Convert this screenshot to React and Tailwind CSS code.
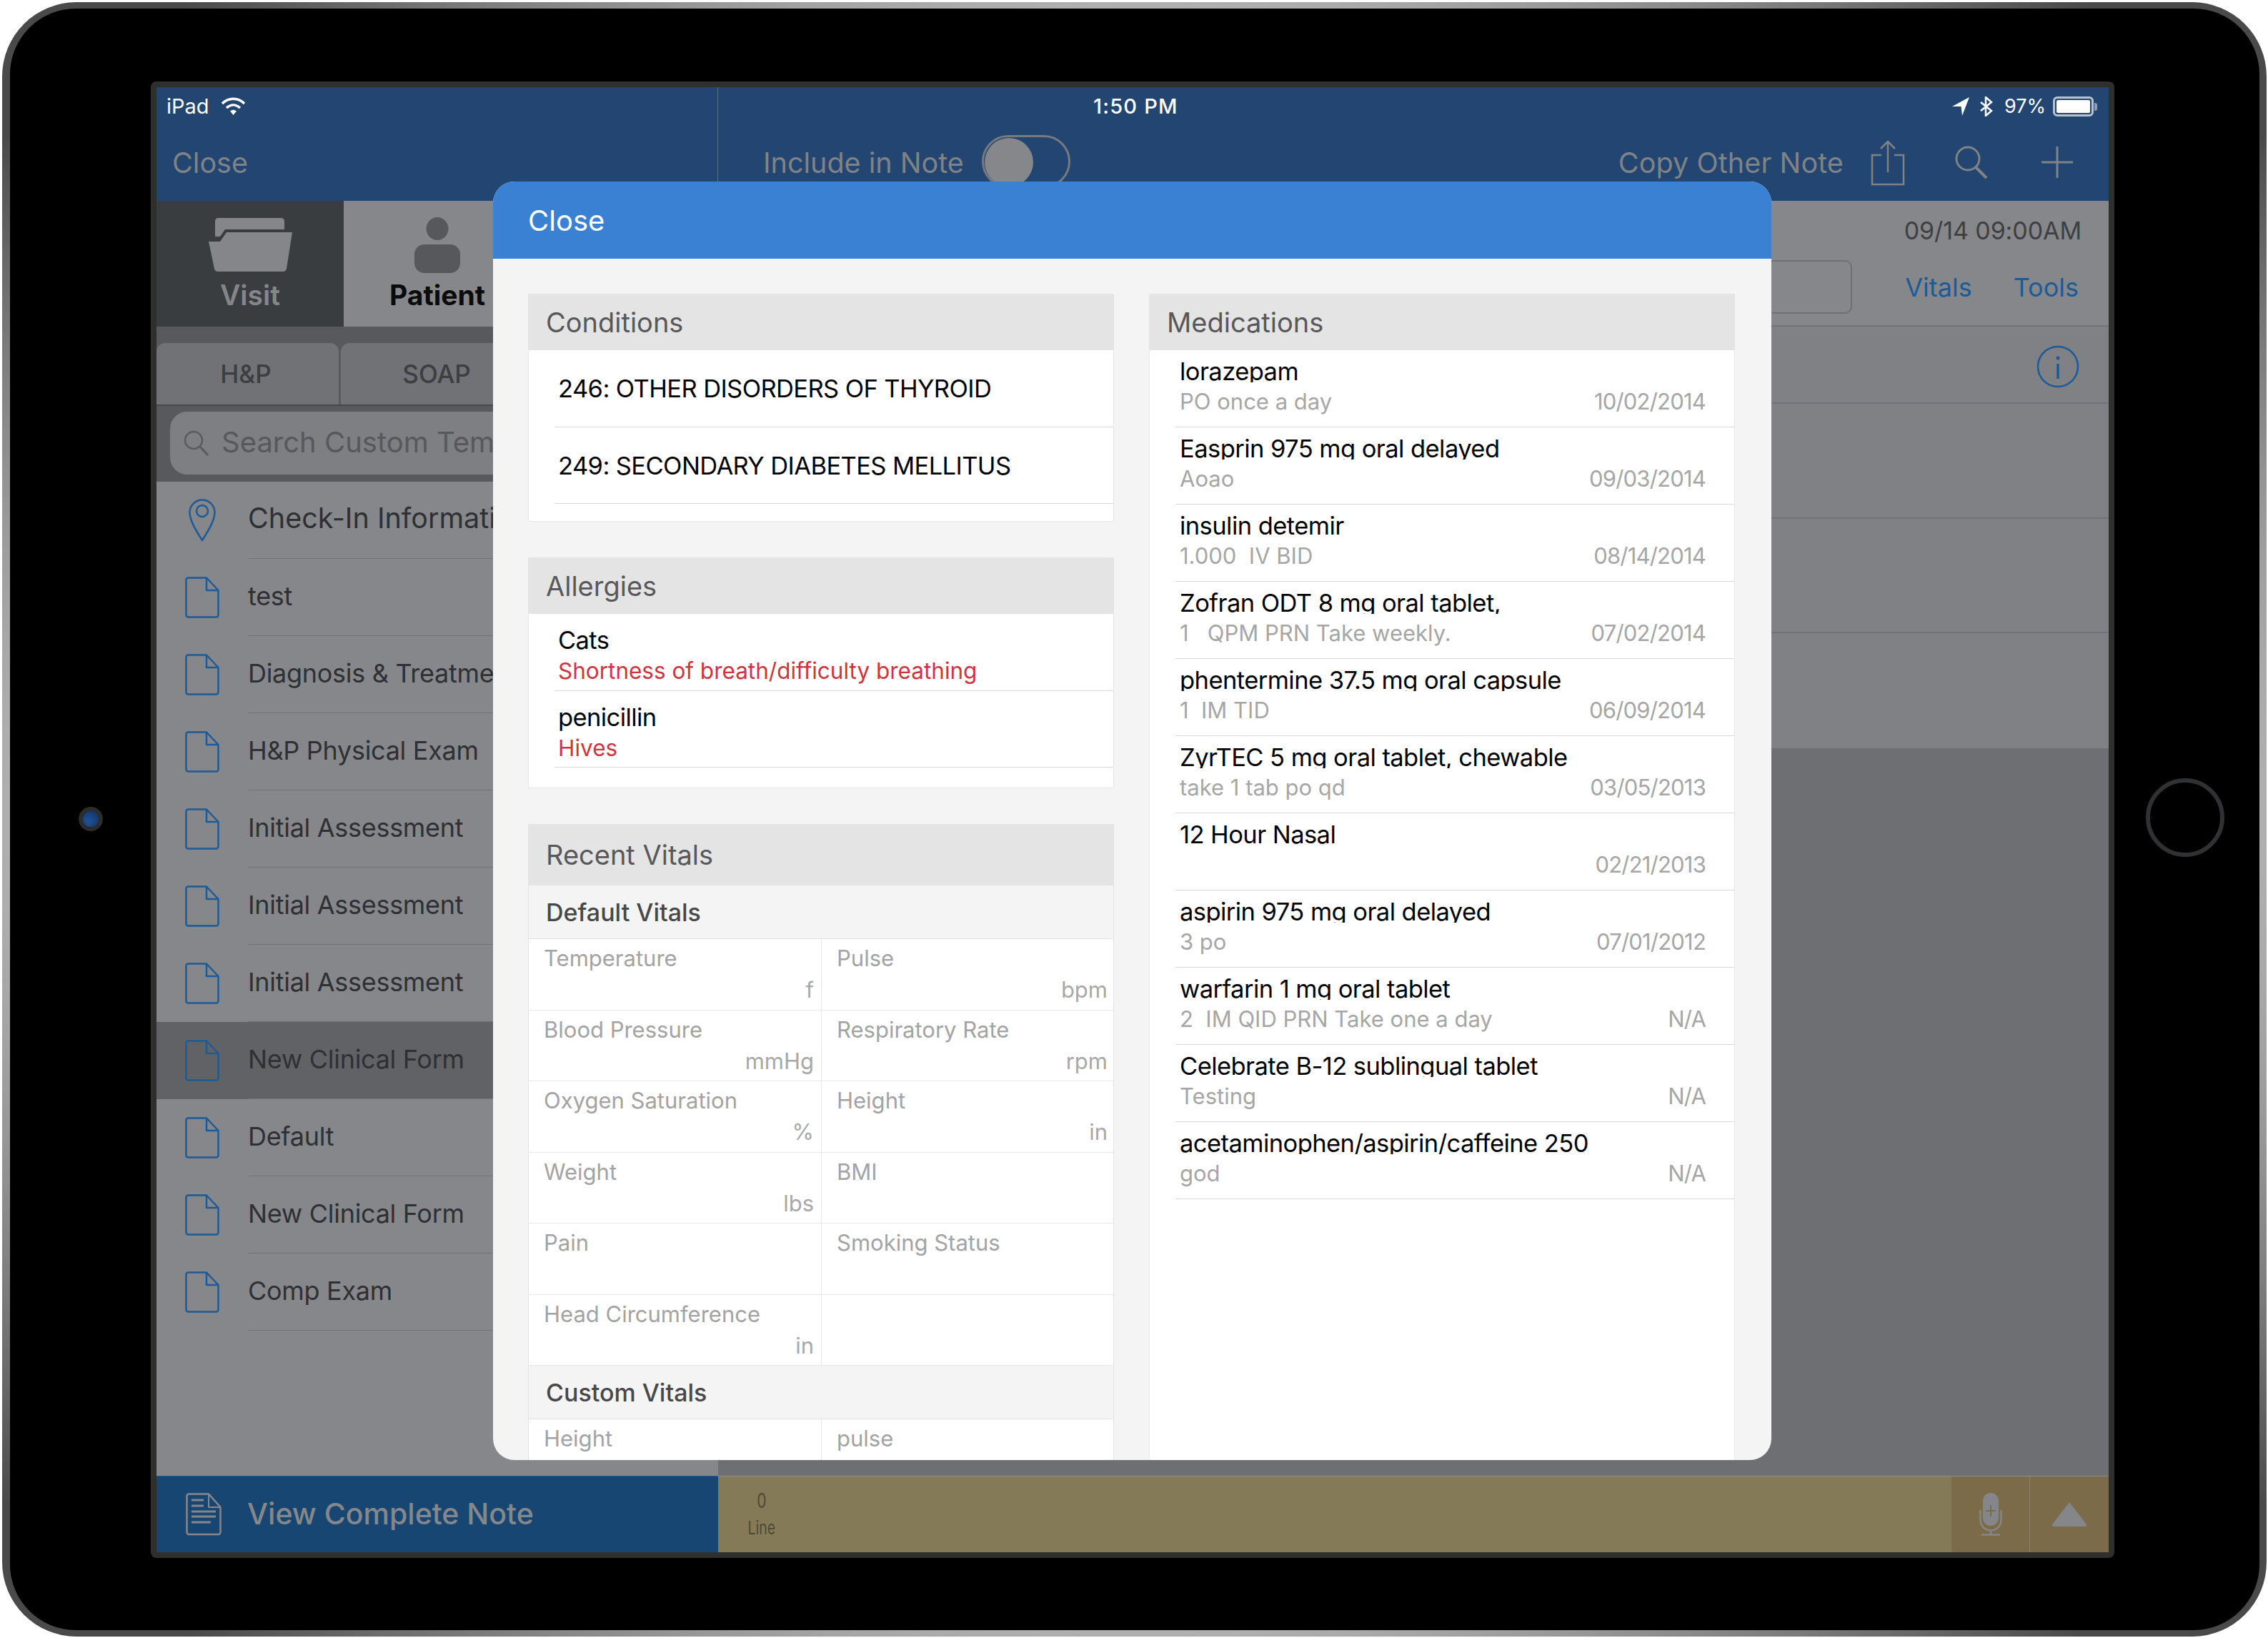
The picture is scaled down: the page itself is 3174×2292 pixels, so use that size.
import React from "react";

const sidebarRows = [
  { label: "Check-In Information", pin: true },
  { label: "test" },
  { label: "Diagnosis & Treatment" },
  { label: "H&P Physical Exam" },
  { label: "Initial Assessment" },
  { label: "Initial Assessment" },
  { label: "Initial Assessment" },
  { label: "New Clinical Form", active: true },
  { label: "Default" },
  { label: "New Clinical Form" },
  { label: "Comp Exam" },
];

const meds = [
  ["lorazepam", "PO once a day", "10/02/2014"],
  ["Easprin 975 mg oral delayed", "Aoao", "09/03/2014"],
  ["insulin detemir", "1.000  IV BID", "08/14/2014"],
  ["Zofran ODT 8 mg oral tablet,", "1   QPM PRN Take weekly.", "07/02/2014"],
  ["phentermine 37.5 mg oral capsule", "1  IM TID", "06/09/2014"],
  ["ZyrTEC 5 mg oral tablet, chewable", "take 1 tab po qd", "03/05/2013"],
  ["12 Hour Nasal", "", "02/21/2013"],
  ["aspirin 975 mg oral delayed", "3 po", "07/01/2012"],
  ["warfarin 1 mg oral tablet", "2  IM QID PRN Take one a day", "N/A"],
  ["Celebrate B-12 sublingual tablet", "Testing", "N/A"],
  ["acetaminophen/aspirin/caffeine 250", "god", "N/A"],
];

const defaultVitals = [
  ["Temperature", "f"],
  ["Pulse", "bpm"],
  ["Blood Pressure", "mmHg"],
  ["Respiratory Rate", "rpm"],
  ["Oxygen Saturation", "%"],
  ["Height", "in"],
  ["Weight", "lbs"],
  ["BMI", ""],
  ["Pain", ""],
  ["Smoking Status", ""],
  ["Head Circumference", "in"],
  ["", ""],
];

function FileIcon() {
  return (
    <svg width="48" height="58" viewBox="0 0 48 58" fill="none" stroke="#1d5b96" strokeWidth="2.5" strokeLinejoin="round">
      <path d="M4 1.5h26L46.5 19v34.5a3 3 0 0 1-3 3H4.5a3 3 0 0 1-3-3V4a3 3 0 0 1 2.500-2.500z" />
      <path d="M30 1.500V19h16.500" />
    </svg>
  );
}

function PinIcon() {
  return (
    <svg width="38" height="60" viewBox="0 0 38 60" fill="none" stroke="#1d5b96" strokeWidth="2.5">
      <path d="M19 58C12 47 1.500 31 1.500 19a17.500 17.500 0 0 1 35 0c0 12-10.500 28-17.500 39z" strokeLinejoin="round" />
      <circle cx="19" cy="17" r="8" />
    </svg>
  );
}

function StatusBar() {
  return (
    <div className="flex h-[52px] text-white text-[27px]">
      <div className="w-[786px] shrink-0 flex items-center gap-[16px] pl-[14px] pt-[2px] border-r border-[#5c6f86]">
        <span className="text-[29px]">iPad</span>
        <svg width="35" height="26" viewBox="0 0 35 26" fill="none" stroke="#fff" strokeWidth="3.500">
          <path d="M2 9c9-9 22-9 31 0" />
          <path d="M8 15c6-5.500 13-5.500 19 0" />
          <path d="M13 19.500q4.500-3.500 9 0L17.500 25z" fill="#fff" stroke="none" />
        </svg>
      </div>
      <div className="flex-1 flex items-center pt-[2px]">
        <span className="ml-[525px] text-[29px] tracking-[1.2px] font-medium">1:50 PM</span>
        <div className="ml-auto flex items-center pr-[16px]">
          <svg width="24" height="26" viewBox="0 0 24 26" fill="#fff">
            <path d="M24 0 0 13h12.500L14 26z" />
          </svg>
          <svg className="ml-[14px]" width="19" height="28" viewBox="0 0 19 28" fill="none" stroke="#fff" strokeWidth="2.500">
            <path d="M2 8l15 12-8 7V1l8 7L2 20" />
          </svg>
          <span className="ml-[16px]">97%</span>
          <div className="ml-[10px] w-[57px] h-[28px] rounded-[6px] border-[3px] border-[#b9c2cf] p-[2px]">
            <div className="w-full h-full bg-white rounded-[2px]" />
          </div>
          <div className="w-[4px] h-[11px] ml-[1px] bg-[#8fa0b5] rounded-r-[3px]" />
        </div>
      </div>
    </div>
  );
}

function NavBar() {
  return (
    <div className="flex h-[107px] text-[#7f8386] text-[39.500px]">
      <div className="w-[786px] shrink-0 pl-[22px] pt-[31px] leading-[46px] border-r border-[#5c6f86]">Close</div>
      <div className="flex-1 flex">
        <span className="ml-[63px] mt-[31px] leading-[46px]">Include in Note</span>
        <div className="ml-[25px] mt-[15px] w-[124px] h-[74px] rounded-full border-[3px] border-[#78797c] p-[1px]">
          <div className="w-[68px] h-[68px] rounded-full bg-[#86878a]" />
        </div>
        <span className="ml-auto mt-[31px] leading-[46px] tracking-[0.1px]">Copy Other Note</span>
        <svg className="ml-[38px] mt-[21px]" width="48" height="65" viewBox="0 0 48 65" fill="none" stroke="#7f8386" strokeWidth="2.500">
          <path d="M15 22H2v41h44V22H33" />
          <path d="M24 46V3M14 13 24 3l10 10" />
        </svg>
        <svg className="ml-[70px] mt-[30px]" width="46" height="46" viewBox="0 0 46 46" fill="none" stroke="#7f8386" strokeWidth="3">
          <circle cx="18" cy="18" r="16" />
          <path d="M29 30l15 15" strokeWidth="4" />
        </svg>
        <svg className="ml-[74px] mt-[30px] mr-[49px]" width="46" height="46" viewBox="0 0 46 46" fill="none" stroke="#7f8386" strokeWidth="3">
          <path d="M23 1v44M1 23h44" />
        </svg>
      </div>
    </div>
  );
}

function Sidebar() {
  return (
    <div className="w-[786px] shrink-0 flex flex-col bg-[#838487]">
      <div className="flex h-[176px]">
        <div className="w-[262px] bg-[#3a3d40] flex flex-col items-center pt-[24px]">
          <svg width="117" height="76" viewBox="0 0 117 76" fill="#85868a">
            <path d="M9 26V5q0-5 5-5h87q5 0 5 5v11H23l-7 10z" />
            <path d="M0 33h16l9-13h92l-8 51q-1 4-5 4H13q-4 0-5-4z" />
          </svg>
          <span className="mt-[10px] text-[39px] leading-[44px] font-semibold text-[#85868a]">Visit</span>
        </div>
        <div className="w-[262px] bg-[#86878a] flex flex-col items-center pt-[22px]">
          <svg width="64" height="80" viewBox="0 0 64 80" fill="#57585b">
            <ellipse cx="32" cy="17" rx="15.500" ry="16" />
            <rect x="0" y="39" width="64" height="40" rx="14" />
          </svg>
          <span className="mt-[8px] text-[39px] leading-[44px] font-bold text-[#0b0b0b]">Patient</span>
        </div>
        <div className="w-[262px] bg-[#3a3d40]" />
      </div>
      <div className="h-[217px] bg-[#58595c] flex flex-col">
        <div className="flex gap-[3px] mt-[23px] h-[86px] border-b-2 border-[#47484b] box-content">
          <div className="w-[255px] h-[86px] rounded-t-[12px] bg-[#717275] flex items-center justify-center pr-[5px] text-[35px] font-medium text-[#3c3e41]">H&amp;P</div>
          <div className="w-[268px] h-[86px] rounded-t-[12px] bg-[#717275] flex items-center justify-center text-[35px] font-medium text-[#3c3e41]">SOAP</div>
        </div>
        <div className="ml-[19px] mr-[19px] mt-[8px] h-[88px] rounded-[24px] bg-[#7e7f82] flex items-center pl-[19px] overflow-hidden">
          <svg width="36" height="36" viewBox="0 0 36 36" fill="none" stroke="#5a5b5e" strokeWidth="2.500">
            <circle cx="14" cy="14" r="12" />
            <path d="M23 23l11 12" strokeWidth="3" />
          </svg>
          <span className="ml-[17px] pb-[3px] text-[40px] text-[#57585b] whitespace-nowrap">Search Custom Templates</span>
        </div>
      </div>
      <div className="flex-1 bg-[#86878a]">
        {sidebarRows.map((row, i) => (
          <div key={i} className={`flex h-[108px] items-center ${row.active ? "bg-[#616266]" : ""}`}>
            <div className="w-[128px] shrink-0 flex justify-center">
              {row.pin ? <PinIcon /> : <FileIcon />}
            </div>
            <div className={`flex-1 h-full flex items-center pb-[3px] border-b border-[#727376] text-[#2e3033] whitespace-nowrap ${row.pin ? "text-[39.500px]" : "text-[36px] tracking-[-0.3px]"}`}>
              {row.label}
            </div>
          </div>
        ))}
      </div>
      <div className="h-[107px] bg-[#174672] border-t border-[#2c5a85] flex items-center pl-[41px]">
        <svg width="50" height="60" viewBox="0 0 50 60" fill="none" stroke="#85878a" strokeWidth="2.500">
          <path d="M4 1.500h28L48.500 20v35a3 3 0 0 1-3 3h-41a3 3 0 0 1-3-3V4A3 3 0 0 1 4 1.500z" />
          <path d="M32 1.500V20h16.500" strokeWidth="2" />
          <path d="M8 10h17M8 18h17M8 26h34M8 33h34M8 41h27" strokeWidth="3" />
        </svg>
        <span className="ml-[36px] text-[41px] font-medium text-[#85878a] whitespace-nowrap">View Complete Note</span>
      </div>
    </div>
  );
}

function MainPane() {
  return (
    <div className="flex-1 flex flex-col bg-[#6e6f73]">
      <div className="h-[176px] bg-[#86878a] flex flex-col items-end border-b-2 border-[#737478] pr-[38px]">
        <span className="mt-[22px] text-[34px] leading-[40px] tracking-[-0.1px] text-[#3d3f42]">09/14 09:00AM</span>
        <div className="flex items-start mt-[21px] mr-[4px]">
          <div className="w-[120px] h-[75px] rounded-[10px] border-2 border-[#6f7073]" />
          <span className="ml-[74px] mt-[16px] text-[36px] leading-[44px] text-[#1d5b96]">Vitals</span>
          <span className="ml-[58px] mt-[16px] text-[36px] leading-[44px] text-[#1d5b96]">Tools</span>
        </div>
      </div>
      <div className="h-[108px] bg-[#808184] flex items-center justify-end pt-[6px] pr-[41px] border-b-2 border-[#727378]">
        <svg width="60" height="60" viewBox="0 0 60 60" fill="none" stroke="#1a5a99">
          <circle cx="30" cy="30" r="28" strokeWidth="2.500" />
          <circle cx="30" cy="18" r="2.500" fill="#1a5a99" stroke="none" />
          <path d="M30 26v21" strokeWidth="3.500" />
        </svg>
      </div>
      <div className="h-[161px] bg-[#808184] border-b-2 border-[#727378]" />
      <div className="h-[160px] bg-[#808184] border-b-2 border-[#727378]" />
      <div className="h-[161px] bg-[#808184]" />
      <div className="flex-1 bg-[#6e6f73]" />
      <div className="h-[107px] bg-[#847a58] border-t border-[#8c8d8e] flex">
        <div className="w-[38px]" />
        <div className="flex flex-col items-center text-[#4e4935] w-[46px] pt-[18px]">
          <span className="text-[28px] leading-[32px] scale-x-75">0</span>
          <span className="text-[26px] leading-[30px] mt-[7px] scale-x-75">Line</span>
        </div>
        <div className="flex-1" />
        <div className="w-[109px] bg-[#7c6b49] flex items-center justify-center">
          <svg width="32" height="60" viewBox="0 0 32 60" fill="none" stroke="#85868a" strokeWidth="2.500">
            <rect x="5" y="0" width="22" height="46" rx="11" fill="#85868a" stroke="none" />
            <path d="M16 17v16M9 25h14" stroke="#7c6b49" strokeWidth="2" />
            <path d="M1.500 24v14a14.500 14.500 0 0 0 29 0V24M16 52v7M3 58.500h26" />
          </svg>
        </div>
        <div className="w-[111px] bg-[#7c6b49] border-l border-[#8c8162] flex items-center justify-center">
          <svg width="52" height="36" viewBox="0 0 52 36" fill="#85868a">
            <path d="M26 1 L50 32 q1 3-2 3H4q-3 0-2-3z" />
          </svg>
        </div>
      </div>
    </div>
  );
}

function SectionHeader({ title, tall }) {
  return (
    <div className={`${tall ? "h-[86px]" : "h-[79px]"} -mx-px bg-[#e4e4e4] flex items-center pl-[25px] text-[38px] text-[#58585a] ${tall ? "" : "pt-[2px]"}`}>
      {title}
    </div>
  );
}

function SubHeader({ title }) {
  return (
    <div className="h-[75px] bg-[#f4f4f4] border-b border-[#e4e4e4] flex items-center pl-[24px] text-[34px] font-medium text-[#48484a]">
      {title}
    </div>
  );
}

function VitalCell({ label, unit, right }) {
  return (
    <div className={`h-[99.500px] border-b border-[#e8e8e8] pl-[21px] ${right ? "pr-[8px]" : "pr-[10px] border-r"}`}>
      <div className="pt-[9px] text-[31px] leading-[36px] text-[#a3a3a3]">{label}</div>
      <div className="mt-[8px] text-right text-[31px] leading-[36px] text-[#a8a8a8]">{unit}</div>
    </div>
  );
}

function Modal() {
  return (
    <div className="absolute left-[471px] top-[132px] w-[1789px] h-[1789px] rounded-[30px] overflow-hidden bg-[#f4f4f4] flex flex-col">
      <div className="h-[108px] shrink-0 bg-[#3b81d3] flex items-center pl-[49px] pt-[2px] text-[40px] text-white">Close</div>
      <div className="flex-1 min-h-0 flex gap-[49px] pt-[49px] pl-[49px] pr-[50px]">
        <div className="w-[820px] flex flex-col gap-[50px]">
          <div className="h-[319px] shrink-0 bg-white border-x border-b border-[#e8e8e8]">
            <SectionHeader title="Conditions" />
            {["246: OTHER DISORDERS OF THYROID", "249: SECONDARY DIABETES MELLITUS"].map((c) => (
              <div key={c} className="ml-[36px] h-[107.500px] flex items-center border-b border-[#d8d8d8] pl-[5px] pt-[2px] text-[34.500px] tracking-[-0.6px] text-black">
                {c}
              </div>
            ))}
          </div>
          <div className="h-[323px] shrink-0 bg-white border-x border-b border-[#e8e8e8]">
            <SectionHeader title="Allergies" />
            {[["Cats", "Shortness of breath/difficulty breathing"], ["penicillin", "Hives"]].map(([name, reaction]) => (
              <div key={name} className="ml-[36px] h-[107.500px] border-b border-[#d8d8d8] pl-[5px] pt-[16px]">
                <div className="text-[34.500px] tracking-[-0.6px] leading-[42px] text-black">{name}</div>
                <div className="mt-[1px] text-[31.500px] leading-[42px] text-[#d0343c]">{reaction}</div>
              </div>
            ))}
          </div>
          <div className="shrink-0 bg-white border-x border-[#e4e4e4]">
            <SectionHeader title="Recent Vitals" tall />
            <SubHeader title="Default Vitals" />
            <div className="grid grid-cols-[410px_1fr]">
              {defaultVitals.map(([label, unit], i) => (
                <VitalCell key={i} label={label} unit={unit} right={i % 2 === 1} />
              ))}
            </div>
            <SubHeader title="Custom Vitals" />
            <div className="grid grid-cols-[410px_1fr]">
              <VitalCell label="Height" unit="" />
              <VitalCell label="pulse" unit="" right />
            </div>
          </div>
        </div>
        <div className="w-[820px] bg-white border-x border-[#e8e8e8]">
          <SectionHeader title="Medications" />
          {meds.map(([name, sub, date], i) => (
            <div key={i} className="ml-[36px] h-[108px] border-b border-[#d8d8d8] pl-[6px] pr-[40px] pt-[12px]">
              <div className="h-[33px] overflow-hidden text-[34.500px] tracking-[-0.56px] leading-[36px] text-black whitespace-pre">{name}</div>
              <div className="mt-[7px] flex justify-between text-[31px] leading-[40px] text-[#a6a6a6]">
                <span className="whitespace-pre">{sub}</span>
                <span className="tracking-[-0.8px]">{date}</span>
              </div>
            </div>
          ))}
        </div>
      </div>
    </div>
  );
}

export default function App() {
  return (
    <div className="w-[3174px] h-[2292px] bg-white pt-[3px] pl-[3px] [font-family:Inter,sans-serif]">
      <div className="w-[3169px] h-[2287px] rounded-[104px] pl-[11px] pt-[9px] bg-[radial-gradient(ellipse_at_center,#dcdcdc_55%,#c4c4c4_66%,#4a4a4a_92%)]">
        <div className="w-[3148px] h-[2269px] pt-[1px] rounded-[92px] bg-black flex items-center">
          <div className="w-[197px] shrink-0 flex justify-center pl-[28px] pb-[3px]">
            <div className="w-[34px] h-[34px] rounded-full bg-[#2c2c2c] flex items-center justify-center">
              <div className="w-[22px] h-[22px] rounded-full bg-[radial-gradient(circle_at_35%_65%,#1f5299,#12305e)]" />
            </div>
          </div>
          <div className="w-[2748px] h-[2066px] shrink-0 rounded-[8px] bg-[#2f2f2d] p-[8px]">
            <div className="relative h-full flex flex-col overflow-hidden">
              <div className="bg-[#224671]">
                <StatusBar />
                <NavBar />
              </div>
              <div className="flex-1 min-h-0 flex">
                <Sidebar />
                <MainPane />
              </div>
              <Modal />
            </div>
          </div>
          <div className="flex-1 flex justify-center pr-[5px] pb-[6px]">
            <div className="w-[110px] h-[110px] rounded-full border-[6px] border-[#303132]" />
          </div>
        </div>
      </div>
    </div>
  );
}
